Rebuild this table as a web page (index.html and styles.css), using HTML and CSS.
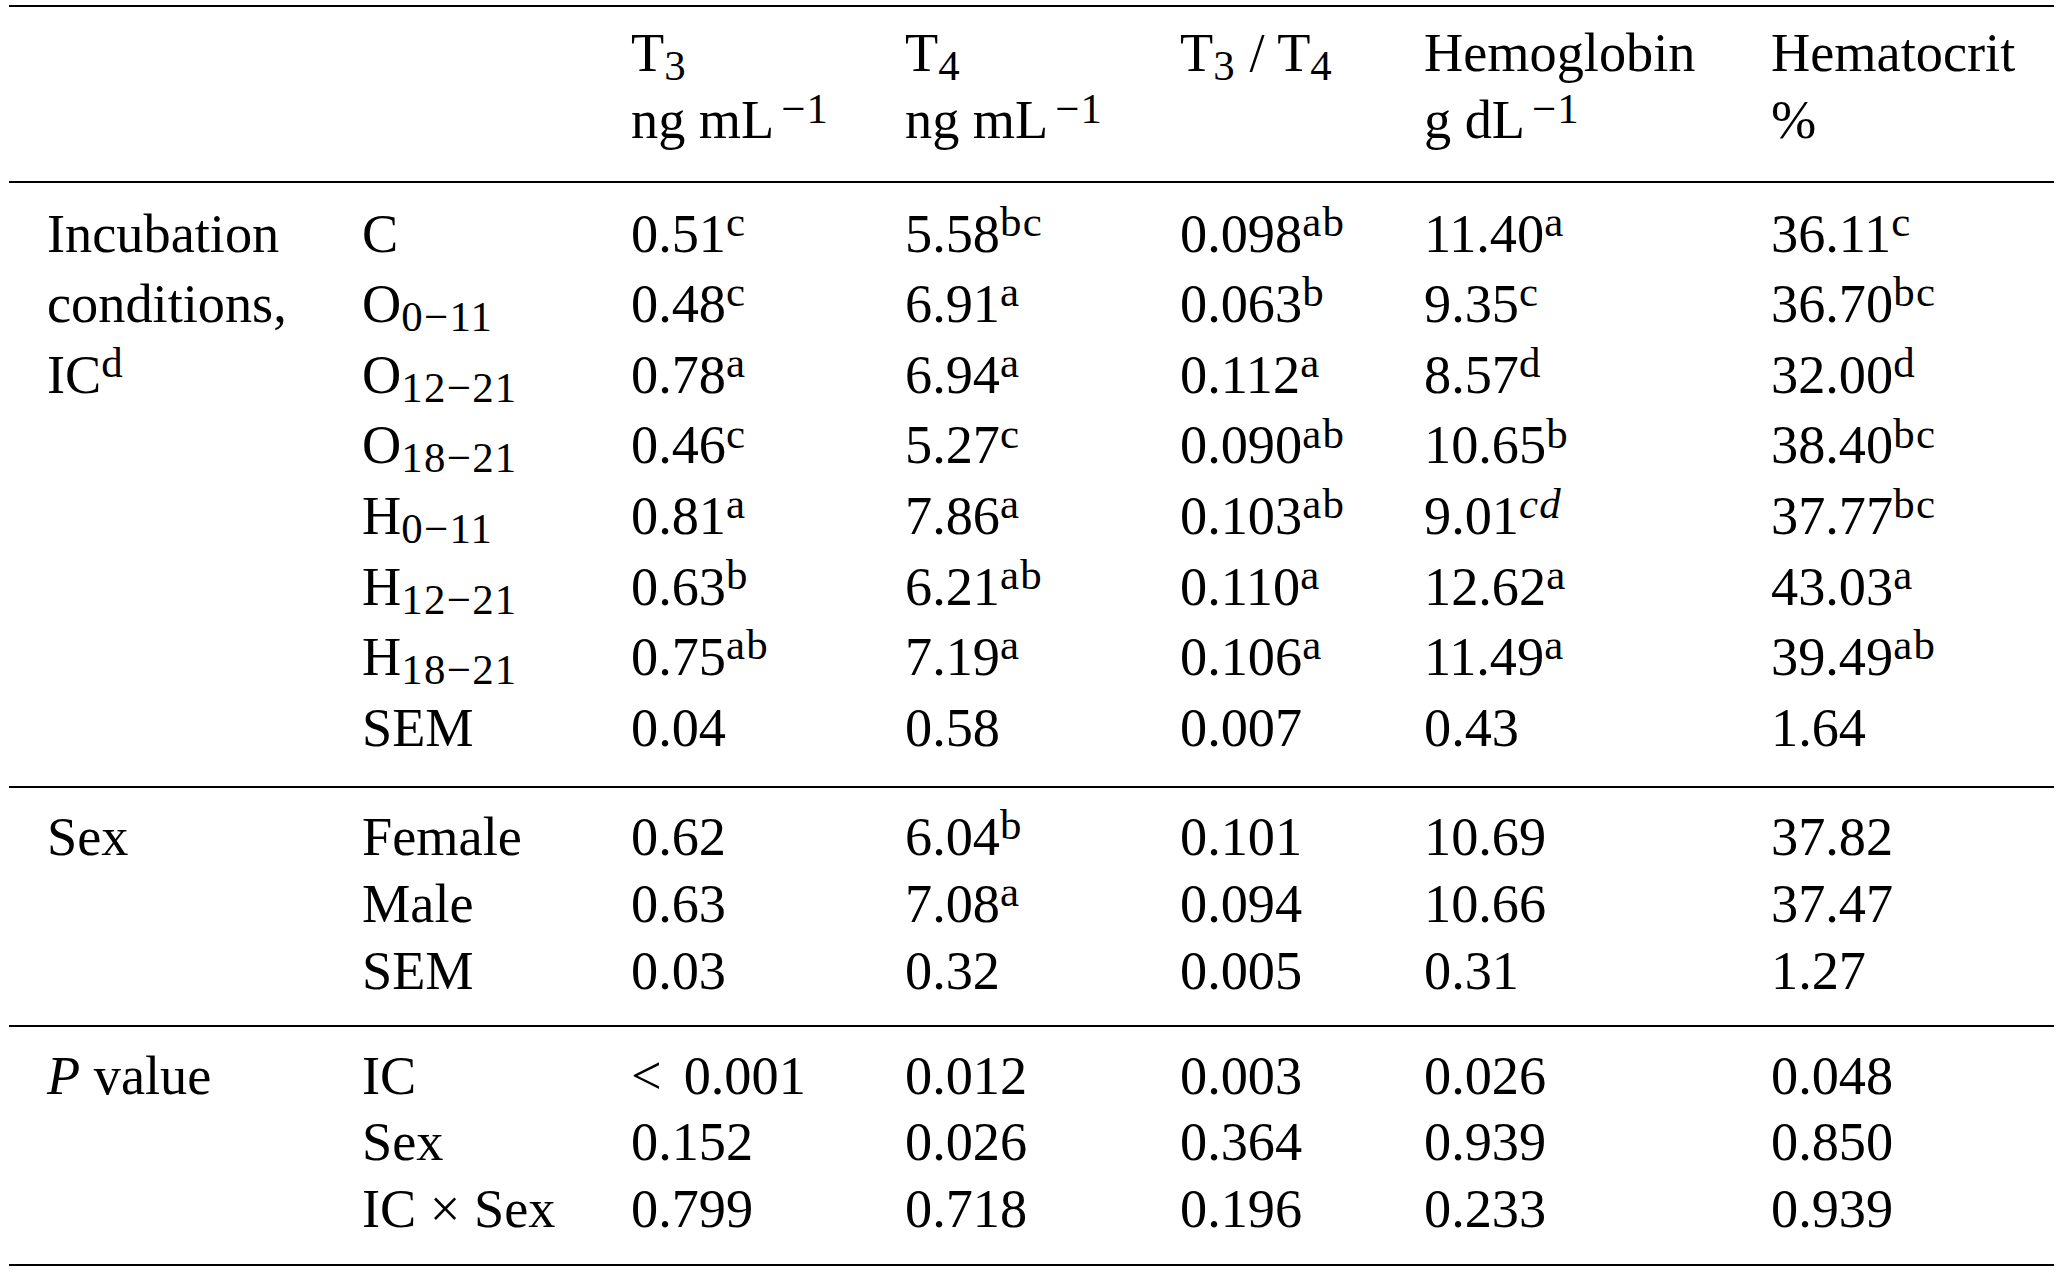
FILE: index.html
```html
<!DOCTYPE html>
<html lang="en">
<head>
<meta charset="utf-8">
<title>Table</title>
<link rel="stylesheet" href="styles.css">
</head>
<body>
<table class="tbl">
  <colgroup>
    <col class="w1"><col class="w2"><col class="w3"><col class="w4"><col class="w5"><col class="w6"><col class="w7">
  </colgroup>
  <thead>
    <tr class="hrow">
      <th class="first"></th>
      <th></th>
      <th>T<sub>3</sub><br>ng mL<sup class="u">−1</sup></th>
      <th>T<sub>4</sub><br>ng mL<sup class="u">−1</sup></th>
      <th>T<sub>3</sub> / T<sub>4</sub></th>
      <th>Hemoglobin<br>g dL<sup class="u">−1</sup></th>
      <th>Hematocrit<br>%</th>
    </tr>
  </thead>
  <tbody class="g1">
    <tr class="top">
      <td class="first" rowspan="3">Incubation<br>conditions,<br>IC<sup>d</sup></td>
      <td>C</td><td>0.51<sup>c</sup></td><td>5.58<sup>bc</sup></td><td>0.098<sup>ab</sup></td><td>11.40<sup>a</sup></td><td>36.11<sup>c</sup></td>
    </tr>
    <tr>
      <td>O<sub>0−11</sub></td><td>0.48<sup>c</sup></td><td>6.91<sup>a</sup></td><td>0.063<sup>b</sup></td><td>9.35<sup>c</sup></td><td>36.70<sup>bc</sup></td>
    </tr>
    <tr>
      <td>O<sub>12−21</sub></td><td>0.78<sup>a</sup></td><td>6.94<sup>a</sup></td><td>0.112<sup>a</sup></td><td>8.57<sup>d</sup></td><td>32.00<sup>d</sup></td>
    </tr>
    <tr>
      <td class="first"></td><td>O<sub>18−21</sub></td><td>0.46<sup>c</sup></td><td>5.27<sup>c</sup></td><td>0.090<sup>ab</sup></td><td>10.65<sup>b</sup></td><td>38.40<sup>bc</sup></td>
    </tr>
    <tr>
      <td class="first"></td><td>H<sub>0−11</sub></td><td>0.81<sup>a</sup></td><td>7.86<sup>a</sup></td><td>0.103<sup>ab</sup></td><td>9.01<sup class="it">cd</sup></td><td>37.77<sup>bc</sup></td>
    </tr>
    <tr>
      <td class="first"></td><td>H<sub>12−21</sub></td><td>0.63<sup>b</sup></td><td>6.21<sup>ab</sup></td><td>0.110<sup>a</sup></td><td>12.62<sup>a</sup></td><td>43.03<sup>a</sup></td>
    </tr>
    <tr>
      <td class="first"></td><td>H<sub>18−21</sub></td><td>0.75<sup>ab</sup></td><td>7.19<sup>a</sup></td><td>0.106<sup>a</sup></td><td>11.49<sup>a</sup></td><td>39.49<sup>ab</sup></td>
    </tr>
    <tr class="bot">
      <td class="first"></td><td>SEM</td><td>0.04</td><td>0.58</td><td>0.007</td><td>0.43</td><td>1.64</td>
    </tr>
  </tbody>
  <tbody class="g2">
    <tr class="top">
      <td class="first">Sex</td><td>Female</td><td>0.62</td><td>6.04<sup>b</sup></td><td>0.101</td><td>10.69</td><td>37.82</td>
    </tr>
    <tr>
      <td class="first"></td><td>Male</td><td>0.63</td><td>7.08<sup>a</sup></td><td>0.094</td><td>10.66</td><td>37.47</td>
    </tr>
    <tr class="bot">
      <td class="first"></td><td>SEM</td><td>0.03</td><td>0.32</td><td>0.005</td><td>0.31</td><td>1.27</td>
    </tr>
  </tbody>
  <tbody class="g3">
    <tr class="top">
      <td class="first"><i>P</i> value</td><td>IC</td><td><span class="rel">&lt;</span>0.001</td><td>0.012</td><td>0.003</td><td>0.026</td><td>0.048</td>
    </tr>
    <tr>
      <td class="first"></td><td>Sex</td><td>0.152</td><td>0.026</td><td>0.364</td><td>0.939</td><td>0.850</td>
    </tr>
    <tr class="bot last">
      <td class="first"></td><td>IC × Sex</td><td>0.799</td><td>0.718</td><td>0.196</td><td>0.233</td><td>0.939</td>
    </tr>
  </tbody>
</table>
</body>
</html>
```

FILE: styles.css
```css
html, body {
  margin: 0;
  padding: 0;
  background: #ffffff;
}

body {
  font-family: "Liberation Serif", "Times New Roman", serif;
  font-size: 54.3px;
  color: #000000;
}

.tbl {
  border-collapse: separate;
  border-spacing: 0;
  table-layout: fixed;
  width: 2045px;
  margin: 5px 0 0 9px;
}

.w1 { width: 353px; }
.w2 { width: 269px; }
.w3 { width: 274px; }
.w4 { width: 275px; }
.w5 { width: 244px; }
.w6 { width: 347px; }
.w7 { width: 283px; }

th, td {
  padding: 0;
  text-align: left;
  vertical-align: top;
  font-weight: normal;
  white-space: nowrap;
}

.first {
  padding-left: 38px;
}

/* header */
.hrow th {
  border-top: 2px solid #000;
  line-height: 67.5px;
  padding-top: 12.9px;
  padding-bottom: 26.1px;
}

/* group 1 */
.g1 td { line-height: 70.6px; }
.g1 .top td { border-top: 2px solid #000; padding-top: 15.7px; }
.g1 .bot td { padding-bottom: 22.1px; }

/* group 2 */
.g2 td { line-height: 67.2px; }
.g2 .top td { border-top: 2px solid #000; padding-top: 16.3px; }
.g2 .bot td { padding-bottom: 19.9px; }

/* group 3 */
.g3 td { line-height: 66.6px; }
.g3 .top td { border-top: 2px solid #000; padding-top: 15.3px; }
.g3 .bot td { padding-bottom: 21.4px; }
.g3 .last td { border-bottom: 2px solid #000; }

sup, sub {
  font-size: 0.79em;
  letter-spacing: 0.03em;
  line-height: 0;
  vertical-align: baseline;
  position: relative;
}

sup { top: -0.37em; }
sub { top: 0.21em; }

sup.u { margin-left: 0.16em; }

.rel { margin-right: 22px; }

.it { font-style: italic; }
i { font-style: italic; }
```
